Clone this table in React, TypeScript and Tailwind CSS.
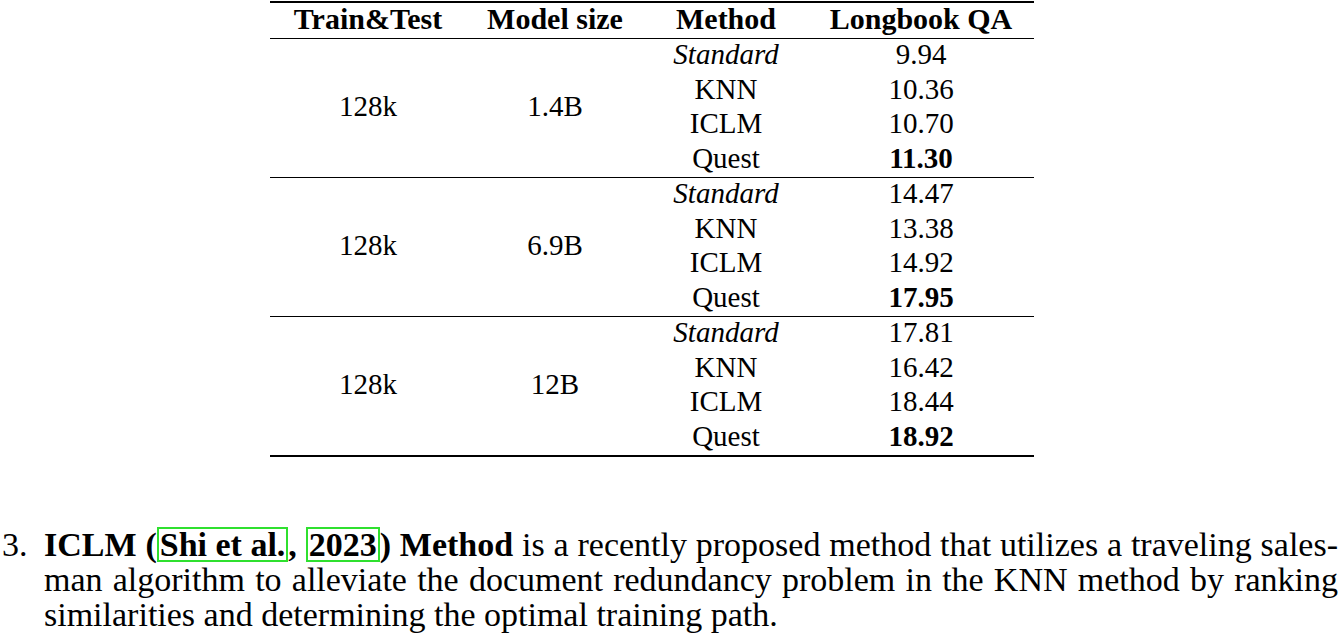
import React from "react";

const groups = [
  { size: "1.4B", vals: ["9.94", "10.36", "10.70", "11.30"] },
  { size: "6.9B", vals: ["14.47", "13.38", "14.92", "17.95"] },
  { size: "12B", vals: ["17.81", "16.42", "18.44", "18.92"] },
];
const methods = ["Standard", "KNN", "ICLM", "Quest"];

function Cite({ children }: { children: React.ReactNode }) {
  return (
    <span className="inline-block h-[35px] leading-[31px] align-top border-2 border-[#2fe02f] px-[1px]">
      {children}
    </span>
  );
}

export default function App() {
  return (
    <div
      className="w-[1341px] h-[642px] bg-white text-black overflow-hidden"
      style={{ fontFamily: '"Liberation Serif", "Times New Roman", serif' }}
    >
      <div className="pt-[1px] ml-[270px] w-[764px] text-[29px]">
        <div className="h-[2px] bg-black" />
        <div className="flex h-[35px] leading-[32px] font-bold text-[30px]">
          <div className="w-[196px] text-center">Train&amp;Test</div>
          <div className="w-[178px] text-center">Model size</div>
          <div className="w-[164px] text-center">Method</div>
          <div className="w-[226px] text-center">Longbook QA</div>
        </div>
        {groups.map((g, gi) => (
          <div key={gi}>
            <div className="h-[1px] bg-black" />
            <div className="flex h-[138px]">
              <div className="w-[196px] flex items-center justify-center pb-[3px]">128k</div>
              <div className="w-[178px] flex items-center justify-center pb-[3px]">{g.size}</div>
              <div className="w-[164px] flex flex-col">
                {methods.map((m, i) => (
                  <div
                    key={m}
                    className={`h-[34.5px] leading-[31px] text-center ${i === 0 ? "italic" : ""}`}
                  >
                    {m}
                  </div>
                ))}
              </div>
              <div className="w-[226px] flex flex-col">
                {g.vals.map((v, i) => (
                  <div
                    key={i}
                    className={`h-[34.5px] leading-[31px] text-center ${i === 3 ? "font-bold" : ""}`}
                  >
                    {v}
                  </div>
                ))}
              </div>
            </div>
          </div>
        ))}
        <div className="h-[2px] bg-black" />
      </div>

      <div className="mt-[70px] flex text-[34px] leading-[35px]">
        <div className="w-[44px] pl-[2px]">3.</div>
        <div className="w-[1294px]">
          <div className="text-justify [text-align-last:justify] whitespace-nowrap">
            <b>
              ICLM (<Cite>Shi et al.</Cite>, <Cite>2023</Cite>) Method
            </b>{" "}
            is a recently proposed method that utilizes a traveling sales-
          </div>
          <div className="text-justify [text-align-last:justify]">
            man algorithm to alleviate the document redundancy problem in the KNN method by ranking
          </div>
          <div>similarities and determining the optimal training path.</div>
        </div>
      </div>
    </div>
  );
}
